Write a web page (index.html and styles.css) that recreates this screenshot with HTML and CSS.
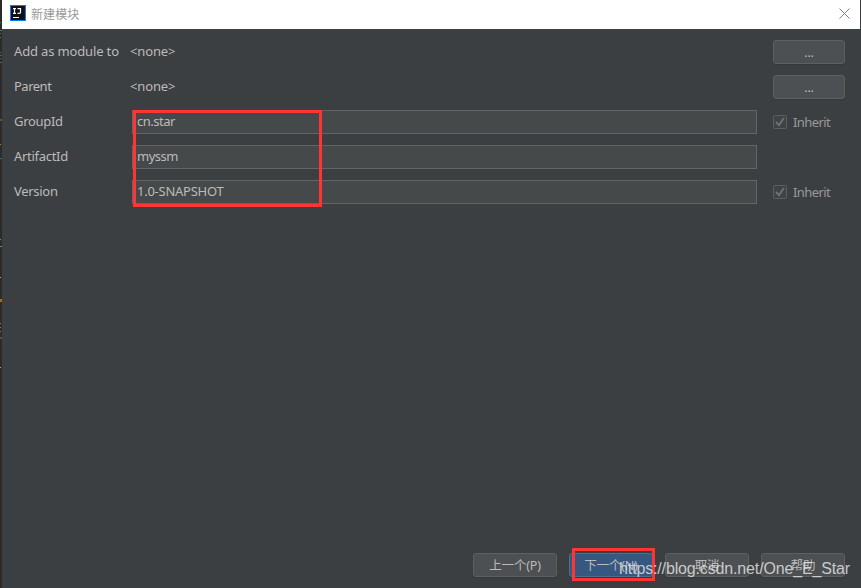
FILE: index.html
```
<!DOCTYPE html>
<html lang="zh-CN">
<head>
    <meta charset="UTF-8">
    <meta name="viewport" content="width=device-width, initial-scale=1.0">
    <title>新建模块</title>
    <link rel="stylesheet" href="styles.css">
</head>
<body>
    <div class="editor">
        <!-- 左侧露出的编辑器代码 -->
        <svg class="code" width="2" height="588" viewBox="0 0 2 588">
            <path stroke="#4f7a3c" d="M0 22.5h1M0 30.5h2M0 33.5h1M0 37.5h1"/>
            <path stroke="#496b4c" d="M0 52.5h1M0 55.5h2M0 58.5h1M0 62.5h2"/>
            <path stroke="#629755" d="M0 120h2M0 246.5h2"/>
            <path stroke="#a98532" d="M0 144.5h1M0 239.5h1"/>
            <path stroke="#3f6b60" d="M0 158.5h2"/>
            <path stroke="#a9a9a0" d="M0 277.5h1M0 367.5h1"/>
            <path stroke="#c75a26" stroke-width="3" d="M0 300.5h2"/>
            <path stroke="#777" d="M0 323.5h1M0 327.5h1M0 331.5h1M0 338h2"/>
        </svg>
        <div class="dialog">
            <div class="titlebar">
                <svg class="logo" width="16" height="16" viewBox="0 0 16 16">
                    <rect width="16" height="16" fill="#087cfa"/>
                    <rect x="1" y="1" width="14" height="14" fill="#101014"/>
                    <path fill="none" stroke="#fff" stroke-width="1.2" d="M3 3.6h3M4.5 3.6v5M3 8.4h3M7.5 3.6h3v3.6q0 1.2-1.2 1.2H7.5"/>
                    <path stroke="#fff" d="M3 12.5h6"/>
                </svg>
                <h1>新建模块</h1>
                <svg class="close" width="11" height="11" viewBox="0 0 11 11">
                    <path stroke="#808080" d="M.5.5l10 10M10.5.5l-10 10"/>
                </svg>
            </div>
            <div class="form">
                <div class="row">
                    <label class="module">Add as module to</label>
                    <span class="none">&lt;none&gt;</span>
                    <button class="btn more">...</button>
                </div>
                <div class="row">
                    <label class="parent">Parent</label>
                    <span class="none">&lt;none&gt;</span>
                    <button class="btn more">...</button>
                </div>
                <div class="fields">
                    <div class="row">
                        <label>GroupId</label>
                        <div class="input">cn.star</div>
                        <div class="inherit">
                            <svg width="14" height="14" viewBox="0 0 14 14">
                                <rect x=".5" y=".5" width="13" height="13" rx="1" fill="#3f4345" stroke="#5c5f60"/>
                                <path fill="none" stroke="#6e7172" stroke-width="2" d="M3 7l3 3.2 4.8-7.2"/>
                            </svg>
                            <span>Inherit</span>
                        </div>
                    </div>
                    <div class="row">
                        <label>ArtifactId</label>
                        <div class="input">myssm</div>
                    </div>
                    <div class="row">
                        <label>Version</label>
                        <div class="input version">1.0-SNAPSHOT</div>
                        <div class="inherit">
                            <svg width="14" height="14" viewBox="0 0 14 14">
                                <rect x=".5" y=".5" width="13" height="13" rx="1" fill="#3f4345" stroke="#5c5f60"/>
                                <path fill="none" stroke="#6e7172" stroke-width="2" d="M3 7l3 3.2 4.8-7.2"/>
                            </svg>
                            <span>Inherit</span>
                        </div>
                    </div>
                    <div class="mark mark-fields"></div>
                </div>
            </div>
            <div class="footer">
                <button class="btn">上一个(P)</button>
                <div class="next">
                    <button class="btn primary">下一个(N)</button>
                    <div class="mark mark-next"></div>
                </div>
                <button class="btn">取消</button>
                <button class="btn">帮助</button>
            </div>
            <div class="watermark">https://blog.csdn.net/One_E_Star</div>
        </div>
    </div>
</body>
</html>
```
FILE: styles.css
```
* {
    margin: 0;
    padding: 0;
    box-sizing: border-box;
}

body {
    height: 588px;
    overflow: hidden;
    background-color: #2b2b2b;
    color: #bbbbbb;
    font-family: "Noto Sans", "Noto Sans CJK SC", sans-serif;
    font-size: 13px;
    letter-spacing: -0.15px;
}

.editor {
    display: flex;
    height: 588px;
}

.code {
    flex: none;
}

.dialog {
    flex: 1;
    display: flex;
    flex-direction: column;
    position: relative;
    background-color: #3c3f41;
}

.titlebar {
    display: flex;
    align-items: center;
    height: 29px;
    margin-right: 1px;
    padding: 0 10px 3px 8px;
    background-color: #fff;
}

.titlebar h1 {
    flex: 1;
    margin-left: 5px;
    padding-top: 1px;
    color: #999;
    font-size: 12px;
    font-weight: 400;
    letter-spacing: 0.1px;
}

.form {
    display: flex;
    flex-direction: column;
    gap: 11px;
    padding: 11px 16px 0 12px;
}

.fields {
    display: flex;
    flex-direction: column;
    gap: 11px;
    position: relative;
}

.row {
    display: flex;
    height: 24px;
    line-height: 23px;
}

.row label {
    width: 118px;
    letter-spacing: -0.3px;
}

.row .module {
    letter-spacing: -0.15px;
}

.row .parent {
    letter-spacing: -0.5px;
}

.none {
    margin-left: -2px;
}

.input {
    width: 625px;
    padding-left: 4px;
    line-height: 21px;
    letter-spacing: -0.5px;
    border: 1px solid #646464;
    background-color: #45494a;
}

.version {
    letter-spacing: -0.25px;
}

.inherit {
    display: flex;
    align-items: center;
    gap: 6px;
    margin-left: 16px;
    color: #999;
    line-height: 24px;
    letter-spacing: -0.6px;
}

.btn {
    width: 84px;
    height: 24px;
    padding-top: 2px;
    border: 1px solid #5e6060;
    border-radius: 3px;
    background-color: #4c5052;
    box-shadow: 0 1px 1px #35383a;
    color: #bbbbbb;
    font-family: inherit;
    font-size: 12.5px;
    line-height: 20px;
    letter-spacing: -0.2px;
}

.more {
    width: 72px;
    margin-left: auto;
}

.footer {
    display: flex;
    gap: 12px;
    margin-top: auto;
    padding: 0 16px 11px;
    justify-content: flex-end;
}

.next {
    position: relative;
}

.primary {
    border-color: #4c708c;
    background-color: #365880;
}

/* 红色标注框 */
.mark {
    position: absolute;
    border: 3px solid #ff3434;
}

.mark-fields {
    left: 119px;
    top: 0;
    width: 189px;
    height: 97px;
}

.mark-next {
    left: 3px;
    top: -5px;
    width: 83px;
    height: 33px;
}

.watermark {
    position: absolute;
    right: 11px;
    bottom: 9px;
    color: rgba(225, 225, 225, 0.85);
    font-family: "Liberation Sans", Arial, sans-serif;
    font-size: 16px;
    line-height: 20px;
}
```
